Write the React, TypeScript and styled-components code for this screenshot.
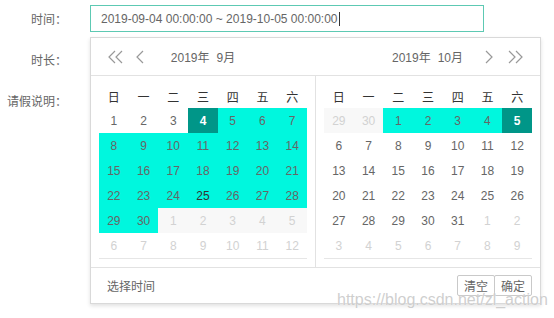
import React from 'react';
import styled, { createGlobalStyle } from 'styled-components';

const GlobalStyle = createGlobalStyle`
  html, body { margin: 0; padding: 0; background: #fff; }
  body {
    font-family: "Liberation Sans", Arial, "Noto Sans CJK SC", sans-serif;
    font-size: 12px;
    color: #666;
  }
`;

const Page = styled.div`
  position: relative;
  width: 554px;
  height: 318px;
  overflow: hidden;
  padding-top: 5px;
  box-sizing: border-box;
`;

const Form = styled.div`
  display: flex;
  flex-direction: column;
  gap: 14px;
`;

const FormRow = styled.div`
  display: flex;
  align-items: center;
  height: 27px;
`;

const Label = styled.label`
  flex: none;
  width: 67px;
  text-align: right;
  font-size: 12px;
  color: #666;
  font-family: "Liberation Sans", "Noto Sans CJK SC", sans-serif;
`;

const InputBox = styled.div`
  margin-left: 23px;
  width: 394px;
  height: 27px;
  box-sizing: border-box;
  border: 1px solid #5dc9b3;
  display: flex;
  align-items: center;
  padding-left: 10px;
  font-size: 12px;
  color: #666;
`;

const Caret = styled.span`
  display: inline-block;
  width: 1px;
  height: 14px;
  background: #333;
  margin-left: 1px;
`;

const Popup = styled.div`
  position: absolute;
  top: 37px;
  left: 90px;
  width: 451px;
  box-sizing: border-box;
  border: 1px solid #d9d9d9;
  background: #fff;
  box-shadow: 0 2px 4px rgba(0, 0, 0, 0.12);
`;

const Panels = styled.div`
  display: flex;
`;

const Panel = styled.div<{ $w: number }>`
  width: ${(p) => p.$w}px;
  flex: none;
`;

const Header = styled.div`
  display: grid;
  grid-template-columns: 1fr auto 1fr;
  align-items: center;
  height: 37px;
  padding: 0 17px;
  border-bottom: 1px solid #e2e2e2;
`;

const ArrowGroup = styled.div<{ $end?: boolean }>`
  display: flex;
  align-items: center;
  justify-content: ${(p) => (p.$end ? 'flex-end' : 'flex-start')};
  gap: ${(p) => (p.$end ? 15 : 13)}px;
`;

const Title = styled.div`
  display: flex;
  gap: 7px;
  color: #666;
  font-size: 12px;
  white-space: nowrap;
`;

const Content = styled.div<{ $divider?: boolean }>`
  padding: 8px;
  border-left: ${(p) => (p.$divider ? '1px solid #e2e2e2' : 'none')};
`;

const Grid = styled.div`
  display: grid;
  grid-template-columns: repeat(7, 1fr);
  grid-template-rows: 24px repeat(6, 25px);
  border-bottom: 1px solid #e6e6e6;
`;

const WeekCell = styled.div`
  display: flex;
  align-items: center;
  justify-content: center;
  color: #333;
  font-size: 12px;
  font-family: "Noto Sans CJK SC", sans-serif;
`;

const DayCell = styled.div<{ $bg: string; $color: string; $bold?: boolean }>`
  display: flex;
  align-items: center;
  justify-content: center;
  background: ${(p) => p.$bg};
  color: ${(p) => p.$color};
  font-weight: ${(p) => (p.$bold ? 700 : 400)};
  font-size: 12px;
`;

const Footer = styled.div`
  height: 35px;
  border-top: 1px solid #e2e2e2;
  display: flex;
  align-items: center;
  justify-content: space-between;
  padding: 0 8px 0 16px;
  font-size: 12px;
  color: #666;
`;

const Buttons = styled.div`
  display: flex;
`;

const Btn = styled.span`
  height: 21px;
  line-height: 19px;
  box-sizing: border-box;
  padding: 0 6px;
  margin-left: -1px;
  border: 1px solid #c9c9c9;
  border-radius: 2px;
  background: #fff;
  color: #666;
  font-size: 12px;
  font-family: "Noto Sans CJK SC", sans-serif;
`;

const Watermark = styled.div`
  position: absolute;
  left: 337px;
  top: 291px;
  font-size: 16px;
  font-family: "Liberation Sans", Arial, sans-serif;
  color: rgba(190, 190, 190, 0.75);
  text-shadow: 0 0 1px #fff;
  pointer-events: none;
  white-space: nowrap;
`;

type Day = { n: number; out?: boolean; sel?: boolean; cur?: boolean; dark?: boolean };

const Chevron = ({ dir, double }: { dir: 'l' | 'r'; double?: boolean }) => {
  const w = double ? 15 : 8;
  const pts = (x: number) =>
    dir === 'l' ? `${x + 6},1 ${x},7 ${x + 6},13` : `${x},1 ${x + 6},7 ${x},13`;
  return (
    <svg width={w} height={14} viewBox={`0 0 ${w} 14`} fill="none" stroke="#999" strokeWidth={1.2}>
      <polyline points={pts(1)} />
      {double && <polyline points={pts(8)} />}
    </svg>
  );
};

const WEEK = ['日', '一', '二', '三', '四', '五', '六'];

const range = (a: number, b: number) => Array.from({ length: b - a + 1 }, (_, i) => a + i);

const leftDays: Day[] = [
  ...range(1, 30).map((n) => ({ n, sel: n >= 5, cur: n === 4, dark: n === 25 })),
  ...range(1, 5).map((n) => ({ n, out: true, sel: true })),
  ...range(6, 12).map((n) => ({ n, out: true })),
];

const rightDays: Day[] = [
  ...range(29, 30).map((n) => ({ n, out: true, sel: true })),
  ...range(1, 31).map((n) => ({ n, sel: n <= 4, cur: n === 5 })),
  ...range(1, 9).map((n) => ({ n, out: true })),
];

const dayStyle = (d: Day) => {
  let bg = 'transparent';
  let color = '#666';
  if (d.cur) {
    bg = '#009688';
    color = '#fff';
  } else if (d.sel && !d.out) {
    bg = '#00f7de';
  } else if (d.sel && d.out) {
    bg = '#f8f8f8';
  }
  if (!d.cur && d.out) color = '#d2d2d2';
  if (d.dark) color = '#333';
  return { bg, color };
};

const Calendar = ({
  width,
  year,
  month,
  side,
  days,
}: {
  width: number;
  year: string;
  month: string;
  side: 'l' | 'r';
  days: Day[];
}) => (
  <Panel $w={width}>
    <Header>
      <ArrowGroup>
        {side === 'l' && (
          <>
            <Chevron dir="l" double />
            <Chevron dir="l" />
          </>
        )}
      </ArrowGroup>
      <Title>
        <span>{year}</span>
        <span>{month}</span>
      </Title>
      <ArrowGroup $end>
        {side === 'r' && (
          <>
            <Chevron dir="r" />
            <Chevron dir="r" double />
          </>
        )}
      </ArrowGroup>
    </Header>
    <Content $divider={side === 'r'}>
      <Grid>
        {WEEK.map((w) => (
          <WeekCell key={w}>{w}</WeekCell>
        ))}
        {days.map((d, i) => {
          const s = dayStyle(d);
          return (
            <DayCell key={i} $bg={s.bg} $color={s.color} $bold={d.cur}>
              {d.n}
            </DayCell>
          );
        })}
      </Grid>
    </Content>
  </Panel>
);

export default function App() {
  return (
    <Page>
      <GlobalStyle />
      <Form>
        <FormRow>
          <Label>时间：</Label>
          <InputBox>
            2019-09-04 00:00:00 ~ 2019-10-05 00:00:00
            <Caret />
          </InputBox>
        </FormRow>
        <FormRow>
          <Label>时长：</Label>
        </FormRow>
        <FormRow>
          <Label>请假说明：</Label>
        </FormRow>
      </Form>
      <Popup>
        <Panels>
          <Calendar width={224} year="2019年" month="9月" side="l" days={leftDays} />
          <Calendar width={225} year="2019年" month="10月" side="r" days={rightDays} />
        </Panels>
        <Footer>
          <span>选择时间</span>
          <Buttons>
            <Btn>清空</Btn>
            <Btn>确定</Btn>
          </Buttons>
        </Footer>
      </Popup>
      <Watermark>https://blog.csdn.net/zl_action</Watermark>
    </Page>
  );
}
